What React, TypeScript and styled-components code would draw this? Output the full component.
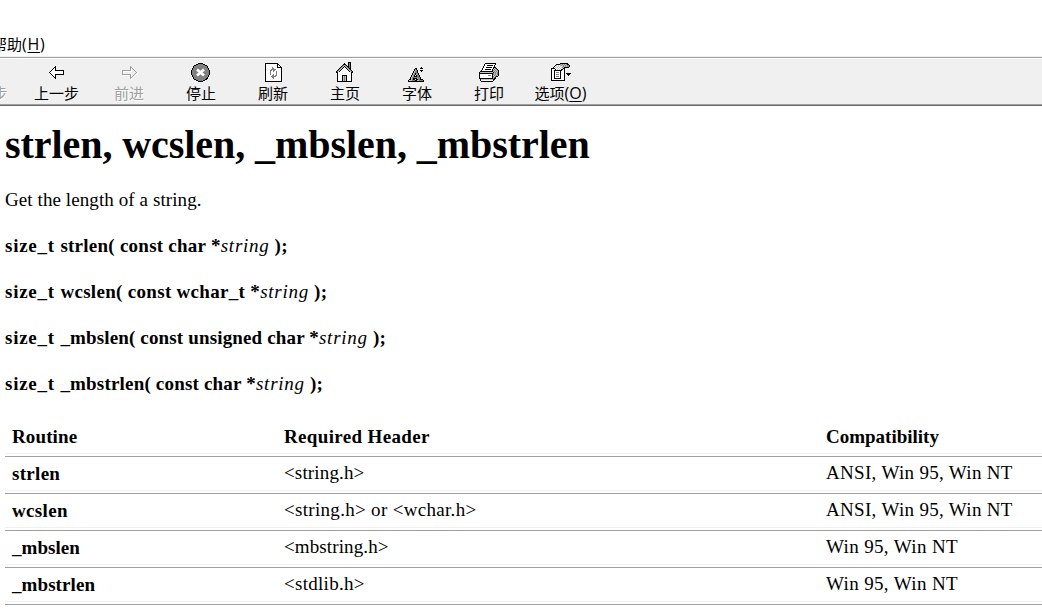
import * as React from 'react'
import styled, { createGlobalStyle } from 'styled-components'

const COLORS: { [key: string]: string } = {
    '#': '#000000',
    g: '#808080',
    l: '#c0c0c0',
    w: '#ffffff',
}

const REFRESH = [
    '#############....',
    '#wwwwwwwwwww##...',
    '#wwwwwwwwwww#w#..',
    '#wwwwwwwwwww#ww#.',
    '#wwwwwwgwwww#####',
    '#wwwwwwggwwwwwww#',
    '#wwwwwgggggwwwww#',
    '#wwwwggwggwwwwww#',
    '#wwwwgwwgwwgwwww#',
    '#wwwwgwwwwwgwwww#',
    '#wwwwgwwwwwgwwww#',
    '#wwwwgwwgwwgwwww#',
    '#wwwwwwggwggwwww#',
    '#wwwwwgggggwwwww#',
    '#wwwwwwggwwwwwww#',
    '#wwwwwwwgwwwwwww#',
    '#wwwwwwwwwwwwwww#',
    '#wwwwwwwwwwwwwww#',
    '#################',
]

const HOME = [
    '.............###...',
    '.........#...#g#...',
    '........###..#g#...',
    '.......#glg#.#g#...',
    '......#gl#lg##g#...',
    '.....#gl#w#lg#g#...',
    '....#gl#www#lg##...',
    '...#gl#wwwww#lg#...',
    '..#gl#wwwwwww#lg#..',
    '.#gl#wwwwwwwww#lg#.',
    '.##wwwwwwwwwwwww##.',
    '..#wwwwwwwwwwwww#..',
    '..#wwwwwwwwwwwww#..',
    '..#wwww#####wwww#..',
    '..#wwww#lgl#wwww#..',
    '..#wwww#lgl#wwww#..',
    '..#wwww#lgl#wwww#..',
    '..#wwww#lgl#wwww#..',
    '..#wwww#lgl#wwww#..',
    '..###############..',
]

const FONT = [
    '.............#..',
    '.......##...###.',
    '......#g#.......',
    '......#lg#..###.',
    '.....#lgg#...#..',
    '.....#lgg#......',
    '....#lg#gg#.....',
    '....#lg#lg#.....',
    '...#lg#.#gg#....',
    '...#lg###gg#....',
    '..#lgggggggg#...',
    '..#lg####lgg#...',
    '.##lg##.##gg###.',
    '#lllggg##llgggg#',
    '################',
]

const PRINT = [
    '......###########...',
    '.....#wwwwwwwwww#...',
    '.....#ww######w#....',
    '....#wwwwwwwwww#....',
    '....#ww######w###...',
    '...#wwwwwwwwww#lg#..',
    '...#ww######w#lglg#.',
    '..#wwwwwwwwww#glglg#',
    '.#############lglgl#',
    '#lllllllllllll#lglg#',
    '##############glglg#',
    '#wwwwwwwwwwww#glglg#',
    '#wwwwwwwwgggw#lglgl#',
    '#wwwwwwwwwwww#glg##.',
    '#wwwwwwwwwwww#lg#...',
    '##############g##...',
    '.#llllllllllll##....',
    '.#wwwwwwwwwwww#.....',
    '..############......',
]

const OPTIONS = [
    '.........########...',
    '.....####glglglg##..',
    '....#lwlwlglglglgg#.',
    '...#wlwlwlwlglglgg#.',
    '..#wlwlwlwlgl#####..',
    '####wlwlwlwl##......',
    '#www#wlwlw##w#......',
    '#ww########ww#......',
    '#ww#wwwww#www#......',
    '#ww#wgggw#www#......',
    '#ww#wwwww#www#.#####',
    '#ww#wgggw#www#..###.',
    '#ww#wwwww#www#...#..',
    '#ww#wgggw#www#......',
    '#ww#wwwww#www#......',
    '#ww#######www#......',
    '#wwwwwwwwwwww#......',
    '##############......',
]

const PixelIcon = ({ rows }: { rows: string[] }) => (
    <svg width={rows[0].length} height={rows.length} shapeRendering="crispEdges">
        {rows.map((row, y) =>
            row
                .split('')
                .map((c, x) => (COLORS[c] ? <rect key={`${x}-${y}`} x={x} y={y} width="1" height="1" fill={COLORS[c]} /> : null)),
        )}
    </svg>
)

const BackIcon = () => (
    <svg width="15" height="13" shapeRendering="crispEdges">
        <path d="M6.5 0.5V4.5H14.5V8.5H6.5V12.5L0.5 6.5Z" fill="#fff" stroke="#000" />
    </svg>
)

const ForwardIcon = () => (
    <svg width="16" height="14" shapeRendering="crispEdges">
        <path d="M9.5 1.5V5.5H1.5V9.5H9.5V13.5L15.5 7.5Z" fill="none" stroke="#fff" />
        <path d="M8.5 0.5V4.5H0.5V8.5H8.5V12.5L14.5 6.5Z" fill="none" stroke="#a0a0a0" />
    </svg>
)

const StopIcon = () => (
    <svg width="19" height="19">
        <circle cx="9.5" cy="9.5" r="9" fill="#808080" stroke="#000" shapeRendering="crispEdges" />
        <path d="M6 6.5L13 12.5M13 6.5L6 12.5" stroke="#fff" strokeWidth="2.6" />
    </svg>
)

const prototypes = [
    { head: 'strlen( const char *', arg: 'string', track: 0.25 },
    { head: 'wcslen( const wchar_t *', arg: 'string', track: 0.31 },
    { head: '_mbslen( const unsigned char *', arg: 'string', track: 0.15 },
    { head: '_mbstrlen( const char *', arg: 'string', track: 0.19 },
]

const ANSI = { text: 'ANSI, Win 95, Win NT', track: 0.32 }
const WIN = { text: 'Win 95, Win NT', track: 0.36 }

const routines = [
    { name: { text: 'strlen', track: 0.3 }, header: { text: '<string.h>', track: 0.15 }, compat: ANSI },
    { name: { text: 'wcslen', track: 0.35 }, header: { text: '<string.h> or <wchar.h>', track: 0.31 }, compat: ANSI },
    { name: { text: '_mbslen', track: 0.05 }, header: { text: '<mbstring.h>', track: 0.12 }, compat: WIN },
    { name: { text: '_mbstrlen', track: 0.08 }, header: { text: '<stdlib.h>', track: 0.28 }, compat: WIN },
]

const App = () => (
    <Window>
        <GlobalStyle />
        <MenuBar>
            帮助
            <Hotkey $track={0.7}>
                (<u>H</u>)
            </Hotkey>
        </MenuBar>
        <Toolbar>
            <ToolButton disabled>
                <IconSlot $top={4} $nudge={2}>
                    <ForwardIcon />
                </IconSlot>
                <Label>下一步</Label>
            </ToolButton>
            <ToolButton>
                <IconSlot $top={4} $nudge={-1}>
                    <BackIcon />
                </IconSlot>
                <Label $nudge={-1}>上一步</Label>
            </ToolButton>
            <ToolButton disabled>
                <IconSlot $top={4} $nudge={2}>
                    <ForwardIcon />
                </IconSlot>
                <Label>前进</Label>
            </ToolButton>
            <ToolButton>
                <IconSlot $nudge={-1}>
                    <StopIcon />
                </IconSlot>
                <Label>停止</Label>
            </ToolButton>
            <ToolButton>
                <IconSlot $nudge={1}>
                    <PixelIcon rows={REFRESH} />
                </IconSlot>
                <Label>刷新</Label>
            </ToolButton>
            <ToolButton>
                <IconSlot $top={0} $nudge={-1}>
                    <PixelIcon rows={HOME} />
                </IconSlot>
                <Label>主页</Label>
            </ToolButton>
            <ToolButton>
                <IconSlot $top={5} $nudge={-2}>
                    <PixelIcon rows={FONT} />
                </IconSlot>
                <Label>字体</Label>
            </ToolButton>
            <ToolButton>
                <IconSlot>
                    <PixelIcon rows={PRINT} />
                </IconSlot>
                <Label>打印</Label>
            </ToolButton>
            <ToolButton>
                <IconSlot>
                    <PixelIcon rows={OPTIONS} />
                </IconSlot>
                <Label $nudge={-1}>
                    选项
                    <Hotkey>
                        (<u>O</u>)
                    </Hotkey>
                </Label>
            </ToolButton>
        </Toolbar>
        <Topic>
            <Title>strlen, wcslen, _mbslen, _mbstrlen</Title>
            <Text>Get the length of a string.</Text>
            {prototypes.map(p => (
                <Text key={p.head}>
                    <Code $track={0.75}>size_t </Code>
                    <Code $track={p.track}>{p.head}</Code>
                    <Arg>{p.arg}</Arg>
                    <Code $track={0.3}> );</Code>
                </Text>
            ))}
            <Table>
                <HeadRow>
                    <HeadCell $track={0.12}>Routine</HeadCell>
                    <HeadCell $track={0.35}>Required Header</HeadCell>
                    <HeadCell>Compatibility</HeadCell>
                </HeadRow>
                {routines.map(r => (
                    <Row key={r.name.text}>
                        <NameCell $track={r.name.track}>{r.name.text}</NameCell>
                        <Cell $track={r.header.track}>{r.header.text}</Cell>
                        <Cell $track={r.compat.track}>{r.compat.text}</Cell>
                    </Row>
                ))}
            </Table>
        </Topic>
    </Window>
)

export default App

const GlobalStyle = createGlobalStyle`
    body {
        margin: 0;
        background: #fff;
        overflow: hidden;
    }
`

const Window = styled.div`
    width: 1042px;
    height: 609px;
    overflow: hidden;
    color: #000;
    background: #fff;
`

const MenuBar = styled.div`
    height: 56px;
    box-sizing: border-box;
    padding-top: 33px;
    margin-left: -8px;
    font: 15px/22px 'Open Sans', 'Noto Sans CJK SC', sans-serif;
    white-space: nowrap;
`

interface ITrackProps {
    $track?: number
}

const Hotkey = styled.span<ITrackProps>`
    font-size: 16px;
    line-height: 1;
    letter-spacing: ${props => props.$track || 0}px;
    u {
        text-underline-offset: 2px;
    }
`

const Toolbar = styled.div`
    display: flex;
    height: 50px;
    box-sizing: border-box;
    overflow: hidden;
    background: #f0f0f0;
    border-top: 1px solid #f0f0f0;
    border-bottom: 1px solid #696969;
    box-shadow: inset 0 1px 0 #a0a0a0, inset 0 2px 0 #fff, inset 0 -1px 0 #a0a0a0;
`

const ToolButton = styled.button`
    flex: none;
    display: flex;
    flex-direction: column;
    align-items: center;
    width: 72px;
    padding: 5px 0 0;
    border: 0;
    background: none;
    color: #000;
    font: 15px/20px 'Open Sans', 'Noto Sans CJK SC', sans-serif;
    &:first-child {
        margin-left: -51px;
    }
    &:disabled {
        color: #a0a0a0;
        text-shadow: 1px 1px 0 #fff;
    }
`

interface ISlotProps {
    $top?: number
    $nudge?: number
}

const IconSlot = styled.span<ISlotProps>`
    display: flex;
    align-items: flex-start;
    justify-content: center;
    height: 21px;
    box-sizing: border-box;
    padding-top: ${props => (props.$top === undefined ? 1 : props.$top)}px;
    margin-left: ${props => props.$nudge || 0}px;
    svg {
        display: block;
    }
`

const Label = styled.span<ISlotProps>`
    height: 20px;
    margin-left: ${props => props.$nudge || 0}px;
    white-space: nowrap;
`

const Topic = styled.div`
    padding: 16px 0 0 5px;
    font: 19px/23px 'Liberation Serif', serif;
`

const Title = styled.h1`
    margin: 0 0 20px;
    font-size: 40px;
    line-height: 46px;
    letter-spacing: -0.06px;
    white-space: nowrap;
`

const Text = styled.p`
    margin: 0 0 23px;
    letter-spacing: 0.09px;
    white-space: nowrap;
`

const Code = styled.b<ITrackProps>`
    letter-spacing: ${props => props.$track || 0}px;
`

const Arg = styled.i`
    letter-spacing: 0.75px;
`

const Table = styled.div`
    width: 1100px;
    margin-top: 24px;
`

const Row = styled.div`
    display: grid;
    grid-template-columns: 272px 542px 1fr;
    height: 37px;
    box-sizing: border-box;
    padding: 4px 7px 0;
    border-bottom: 1px solid #a0a0a0;
    box-shadow: inset 0 -2px 0 #fff, inset 0 -3px 0 #f0f0f0;
`

const HeadRow = styled(Row)`
    height: 38px;
    padding-top: 6px;
`

const Cell = styled.div<ITrackProps>`
    letter-spacing: ${props => props.$track || 0}px;
    white-space: nowrap;
`

const HeadCell = styled(Cell)`
    font-weight: bold;
`

const NameCell = styled(Cell)`
    font-weight: bold;
    padding-top: 1px;
`
